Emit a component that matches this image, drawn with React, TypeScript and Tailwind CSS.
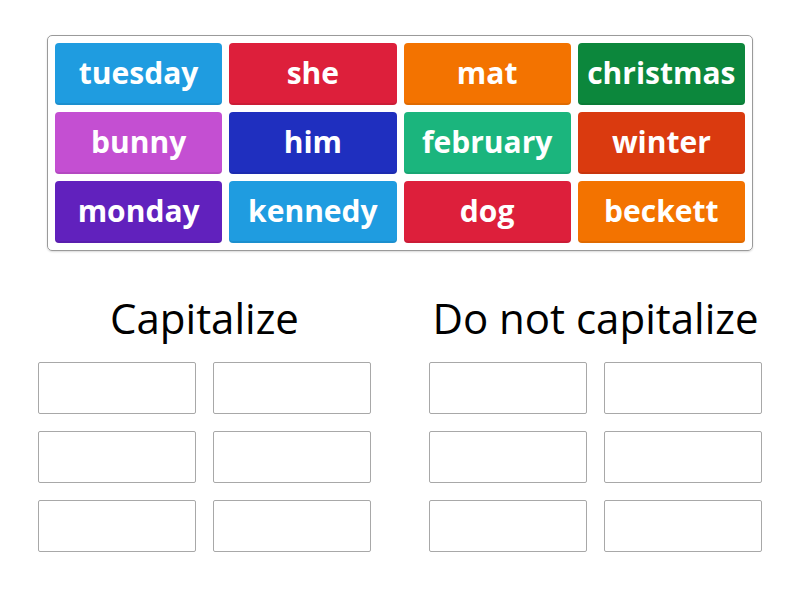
const tiles = [
  { word: "tuesday", color: "bg-[#1f9ce0]" },
  { word: "she", color: "bg-[#dd1f3b]" },
  { word: "mat", color: "bg-[#f37300]" },
  { word: "christmas", color: "bg-[#0c873c]" },
  { word: "bunny", color: "bg-[#c44fd2]" },
  { word: "him", color: "bg-[#1f2fbf]" },
  { word: "february", color: "bg-[#1bb57d]" },
  { word: "winter", color: "bg-[#da3a0f]" },
  { word: "monday", color: "bg-[#6121bd]" },
  { word: "kennedy", color: "bg-[#1f9ce0]" },
  { word: "dog", color: "bg-[#dd1f3b]" },
  { word: "beckett", color: "bg-[#f37300]" },
];

const groups = ["Capitalize", "Do not capitalize"];

function Group({ title }: { title: string }) {
  return (
    <div className="flex w-[333px] flex-col items-center">
      <h2 className="h-[54px] text-[42px] leading-[54px] font-normal whitespace-nowrap text-black">{title}</h2>
      <div className="mt-[17px] grid grid-cols-2 gap-x-[17px] gap-y-[17px]">
        {[...Array(6)].map((_, i) => (
          <div key={i} className="h-[52px] w-[158px] rounded-[2px] border border-[#a8a8a8] bg-white" />
        ))}
      </div>
    </div>
  );
}

export default function App() {
  return (
    <div
      className="min-h-[600px] w-[800px] bg-white"
      style={{ fontFamily: '"Open Sans", "Noto Sans", sans-serif' }}
    >
      <div className="pt-[35px] pl-[47px]">
        <div className="w-[706px] rounded-[5px] border border-[#9a9a9a] p-[7px] shadow-[0_1px_2px_rgba(0,0,0,0.15)]">
          <div className="grid grid-cols-4 gap-[7px]">
            {tiles.map((t) => (
              <div
                key={t.word}
                className={`${t.color} flex h-[62px] items-center justify-center rounded-[4px] pb-[4px] text-[30px] font-bold text-white shadow-[inset_0_-2px_0_rgba(0,0,0,0.08)]`}
              >
                {t.word}
              </div>
            ))}
          </div>
        </div>
      </div>
      <div className="mt-[40px] flex gap-[58px] pl-[38px]">
        {groups.map((g) => (
          <Group key={g} title={g} />
        ))}
      </div>
    </div>
  );
}
